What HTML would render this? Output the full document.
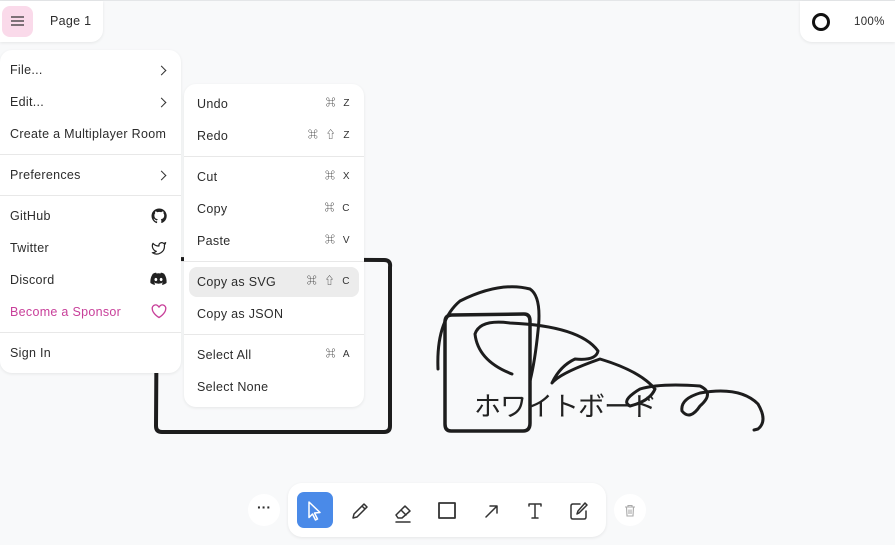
<!DOCTYPE html>
<html><head><meta charset="utf-8"><style>
*{box-sizing:border-box;margin:0;padding:0}
body{width:895px;height:544px;overflow:hidden;background:#f8f9fa;font-family:"Liberation Sans","Noto Sans CJK JP",sans-serif;color:#2c2c2c;position:relative;border-top:1px solid #e4e6e8}
.panel{position:absolute;background:#fff;border-radius:12px;box-shadow:0 1px 3px rgba(0,0,0,.08)}
.it{position:absolute;left:10px;font-size:12.5px;font-weight:500;letter-spacing:.3px;line-height:16px}
.kb{position:absolute;right:14px;font-size:10px;color:#333;letter-spacing:2.5px;line-height:16px;margin-right:-2px}
.div{position:absolute;left:0;right:0;height:1px;background:#e8e8e8}
.chev{position:absolute;right:16px;width:7px;height:7px;border-right:1.5px solid #333;border-top:1.5px solid #333;transform:rotate(45deg)}
.ic{position:absolute;right:14px}
</style></head><body>
<svg width="895" height="544" style="position:absolute;left:0;top:0" fill="none" stroke="#1d1d1d" stroke-linecap="round" stroke-linejoin="round">
<path d="M160 258 L384 259 Q391 259 390 266 L390 425 Q390 431 384 431 L162 431 Q156 431 156 425 L157 264" stroke-width="4"/>
<path d="M452 314 L524 313 Q530 313 530 320 L530 422 Q530 430 523 430 L451 430 Q445 430 445 423 L445 321 Q445 314 452 314Z" stroke-width="3.5"/>
<path d="M438 368 Q436 320 460 300 Q500 280 530 288 Q542 296 538 330 Q535 360 530 380" stroke-width="3"/>
<path d="M512 373 Q478 360 475 333 Q480 318 510 322 Q580 325 598 350 Q596 360 575 358 Q560 365 552 382 Q560 372 600 358 Q640 370 655 388 Q650 400 630 405 Q620 400 640 388 Q660 382 700 385 Q715 392 700 405 Q690 420 682 410 Q680 398 700 392 Q740 385 758 403 Q768 420 758 428 L754 429" stroke-width="3"/>
</svg>
<div style="position:absolute;left:474px;top:386px;font-size:27px;font-family:'Noto Sans CJK JP',sans-serif;color:#222;letter-spacing:-1px;line-height:36px">ホワイトボード</div>

<div class="panel" style="left:0;top:0;width:103px;height:41px;border-radius:0 0 12px 0">
<div style="position:absolute;left:2px;top:5px;width:31px;height:31px;background:#fadaea;border-radius:8px"></div>
<svg style="position:absolute;left:10px;top:14px" width="15" height="12" stroke="#333" stroke-width="1.3"><path d="M1 2H14M1 6H14M1 10H14"/></svg>
<div class="it" style="left:50px;top:12px">Page 1</div>
</div>

<div class="panel" style="left:800px;top:0;width:95px;height:41px;border-radius:0 0 0 12px">
<div style="position:absolute;left:12px;top:12px;width:18px;height:18px;border:3.5px solid #111;border-radius:50%"></div>
<div class="it" style="left:54px;top:13px;font-size:11.5px">100%</div>
</div>

<div class="panel" style="left:0;top:49px;width:181px;height:323px">
<div class="it" style="top:12px">File...</div><div class="chev" style="top:17px"></div>
<div class="it" style="top:44px">Edit...</div><div class="chev" style="top:49px"></div>
<div class="it" style="top:76px">Create a Multiplayer Room</div>
<div class="div" style="top:104px"></div>
<div class="it" style="top:117px">Preferences</div><div class="chev" style="top:122px"></div>
<div class="div" style="top:145px"></div>
<div class="it" style="top:158px">GitHub</div>
<svg class="ic" style="top:158px" width="16" height="16" viewBox="0 0 16 16"><path fill="#222" d="M8 0.5a7.5 7.5 0 0 0-2.4 14.6c.4.1.5-.2.5-.4v-1.4c-2.1.5-2.5-1-2.5-1-.3-.9-.8-1.1-.8-1.1-.7-.5.1-.5.1-.5.8.1 1.200.8 1.200.8.7 1.200 1.800.8 2.200.6.1-.5.3-.8.5-1-1.700-.2-3.400-.8-3.400-3.700 0-.8.3-1.500.8-2-.1-.2-.3-1 .1-2 0 0 .6-.2 2.100.8a7 7 0 0 1 3.800 0c1.400-1 2.100-.8 2.100-.8.4 1 .2 1.800.1 2 .5.5.8 1.200.8 2 0 2.900-1.800 3.500-3.400 3.700.3.2.5.7.5 1.400v2.100c0 .2.1.5.6.4A7.5 7.5 0 0 0 8 .5z"/></svg>
<div class="it" style="top:190px">Twitter</div>
<svg class="ic" style="top:190px" width="16" height="16" viewBox="0 0 24 24" fill="none" stroke="#222" stroke-width="1.8" stroke-linejoin="round"><path d="M22 4s-.7 2.1-2 3.4c1.6 10-9.4 17.3-18 11.6 2.2.1 4.4-.6 6-2C3 15.5.5 9.6 3 5c2.2 2.6 5.6 4.1 9 4-.9-4.2 4-6.6 7-3.8 1.1 0 3-1.2 3-1.2z"/></svg>
<div class="it" style="top:222px">Discord</div>
<svg class="ic" style="top:222px" width="17" height="14" viewBox="0 0 24 18"><path fill="#222" d="M20 1.5A19 19 0 0 0 15.4 0l-.6 1.2a17 17 0 0 0-5.6 0L8.6 0A19 19 0 0 0 4 1.5C1 6 .3 10.3.6 14.6A19 19 0 0 0 6.3 17.5l1.2-2a12 12 0 0 1-1.9-.9l.5-.4a13.6 13.6 0 0 0 11.8 0l.5.4c-.6.4-1.2.7-1.9.9l1.2 2a19 19 0 0 0 5.7-2.9c.4-5-.7-9.3-3.4-13.1zM8.3 12c-1.1 0-2-1-2-2.3s.9-2.3 2-2.3 2 1 2 2.3-.9 2.3-2 2.3zm7.4 0c-1.1 0-2-1-2-2.3s.9-2.3 2-2.3 2 1 2 2.3-.9 2.3-2 2.3z"/></svg>
<div class="it" style="top:254px;color:#c8409a">Become a Sponsor</div>
<svg class="ic" style="top:254px" width="16" height="15" viewBox="0 0 24 22" fill="none" stroke="#c8409a" stroke-width="2"><path d="M12 20S2 14 2 7.5A5 5 0 0 1 12 5a5 5 0 0 1 10 2.5C22 14 12 20 12 20z"/></svg>
<div class="div" style="top:282px"></div>
<div class="it" style="top:295px">Sign In</div>
</div>

<div class="panel" style="left:184px;top:83px;width:180px;height:323px">
<div class="it" style="left:13px;top:12px">Undo</div><div class="kb" style="top:12px">⌘ Z</div>
<div class="it" style="left:13px;top:44px">Redo</div><div class="kb" style="top:44px">⌘ ⇧ Z</div>
<div class="div" style="top:72px"></div>
<div class="it" style="left:13px;top:85px">Cut</div><div class="kb" style="top:85px">⌘ X</div>
<div class="it" style="left:13px;top:117px">Copy</div><div class="kb" style="top:117px">⌘ C</div>
<div class="it" style="left:13px;top:149px">Paste</div><div class="kb" style="top:149px">⌘ V</div>
<div class="div" style="top:177px"></div>
<div style="position:absolute;left:5px;top:183px;width:170px;height:30px;background:#ececec;border-radius:8px"></div>
<div class="it" style="left:13px;top:190px">Copy as SVG</div><div class="kb" style="top:190px">⌘ ⇧ C</div>
<div class="it" style="left:13px;top:222px">Copy as JSON</div>
<div class="div" style="top:250px"></div>
<div class="it" style="left:13px;top:263px">Select All</div><div class="kb" style="top:263px">⌘ A</div>
<div class="it" style="left:13px;top:295px">Select None</div>
</div>

<div style="position:absolute;left:248px;top:493px;width:32px;height:32px;border-radius:50%;background:#fff;text-align:center;font-size:14px;line-height:26px;font-weight:bold">···</div>
<div class="panel" style="left:288px;top:482px;width:318px;height:54px;border-radius:14px">
<div style="position:absolute;left:9px;top:9px;width:36px;height:36px;background:#4a8ae8;border-radius:7px"></div>
<svg width="318" height="54" style="position:absolute;left:0;top:0" fill="none" stroke="#333" stroke-width="1.5" stroke-linecap="round" stroke-linejoin="round">
<path d="M21 19L32 29.5L26.5 30L29.5 36L27.5 37L24.5 31L21 34.5Z" stroke="#fff"/>
<path d="M65 35L66 31L76 21L79 24L69 34Z M74 23L77 26" />
<path d="M108 32L117 23L122 28L114 35H110Z M113 27L118 32 M108 39H122"/>
<rect x="151" y="20" width="16" height="15" stroke-width="1.8"/>
<path d="M198 34L209 23M202 23H209V30"/>
<path d="M241 21H253M247 21V35M244 35H250M241 21V23M253 21V23"/>
<path d="M292 21H285Q283 21 283 23V34Q283 36 285 36H296Q298 36 298 34V28 M289 31L290 28L297 20L299 22L291 30Z"/>
</svg>
</div>
<div style="position:absolute;left:614px;top:493px;width:32px;height:32px;border-radius:50%;background:#fff"></div>
<svg style="position:absolute;left:624px;top:503px" width="12" height="13" fill="none" stroke="#aaa" stroke-width="1.1"><path d="M1 3H11M4 3V1.5H8V3M2.5 3L3 12H9L9.5 3M5 5.5V10M7 5.5V10"/></svg>
</body></html>
